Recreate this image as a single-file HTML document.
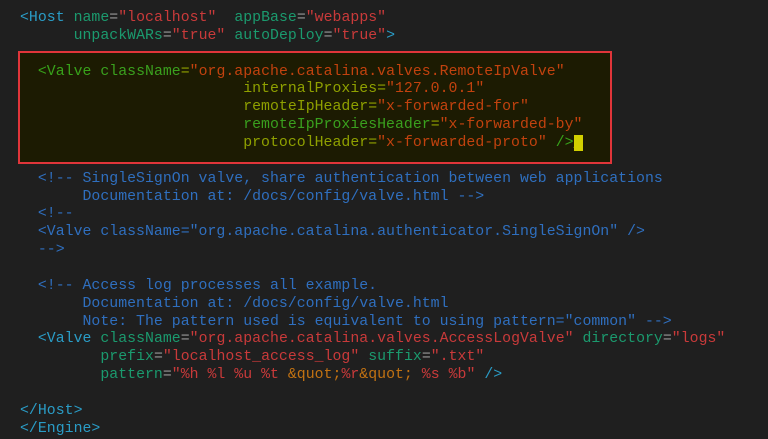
<!DOCTYPE html>
<html><head><meta charset="utf-8"><style>
html,body{margin:0;padding:0;background:#1f1f1f;width:768px;height:424px;overflow:hidden}
.box{position:absolute;left:18px;top:51px;width:590px;height:109px;border:2px solid #e0353a;background:#1c1b02}
pre{position:absolute;left:20px;top:10px;margin:0;font-family:"Liberation Mono",monospace;font-size:14.85px;line-height:17.86px;color:#999;letter-spacing:0.02px}
.t{color:#2a9cc6}.a{color:#1b9a6e}.v{color:#c93a3a}.e{color:#999}.c{color:#2f6fbf}.o{color:#c27212}
.bt{color:#38a21a}.ba{color:#3aa01e}.by{color:#8fa000}.bv{color:#c2420e}
.cur{background:#d2d000;color:#d2d000}
</style></head><body>
<div class="box"></div>
<pre><span class="t">&lt;Host</span> <span class="a">name</span>=<span class="v">"localhost"</span>  <span class="a">appBase</span>=<span class="v">"webapps"</span>
      <span class="a">unpackWARs</span>=<span class="v">"true"</span> <span class="a">autoDeploy</span>=<span class="v">"true"</span><span class="t">&gt;</span>

  <span class="bt">&lt;Valve</span> <span class="ba">className</span><span class="by">=</span><span class="bv">"org.apache.catalina.valves.RemoteIpValve"</span>
                         <span class="by">internalProxies=</span><span class="bv">"127.0.0.1"</span>
                         <span class="by">remoteIpHeader=</span><span class="bv">"x-forwarded-for"</span>
                         <span class="ba">remoteIpProxiesHeader</span><span class="by">=</span><span class="bv">"x-forwarded-by"</span>
                         <span class="by">protocolHeader=</span><span class="bv">"x-forwarded-proto"</span> <span class="bt">/&gt;</span><span class="cur">_</span>

<span class="c">  &lt;!-- SingleSignOn valve, share authentication between web applications
       Documentation at: /docs/config/valve.html --&gt;
  &lt;!--
  &lt;Valve className="org.apache.catalina.authenticator.SingleSignOn" /&gt;
  --&gt;</span>

<span class="c">  &lt;!-- Access log processes all example.
       Documentation at: /docs/config/valve.html
       Note: The pattern used is equivalent to using pattern="common" --&gt;</span>
  <span class="t">&lt;Valve</span> <span class="a">className</span>=<span class="v">"org.apache.catalina.valves.AccessLogValve"</span> <span class="a">directory</span>=<span class="v">"logs"</span>
         <span class="a">prefix</span>=<span class="v">"localhost_access_log"</span> <span class="a">suffix</span>=<span class="v">".txt"</span>
         <span class="a">pattern</span>=<span class="v">"%h %l %u %t </span><span class="o">&amp;quot;</span><span class="v">%r</span><span class="o">&amp;quot;</span><span class="v"> %s %b"</span> <span class="t">/&gt;</span>

<span class="t">&lt;/Host&gt;</span>
<span class="t">&lt;/Engine&gt;</span></pre>
</body></html>
